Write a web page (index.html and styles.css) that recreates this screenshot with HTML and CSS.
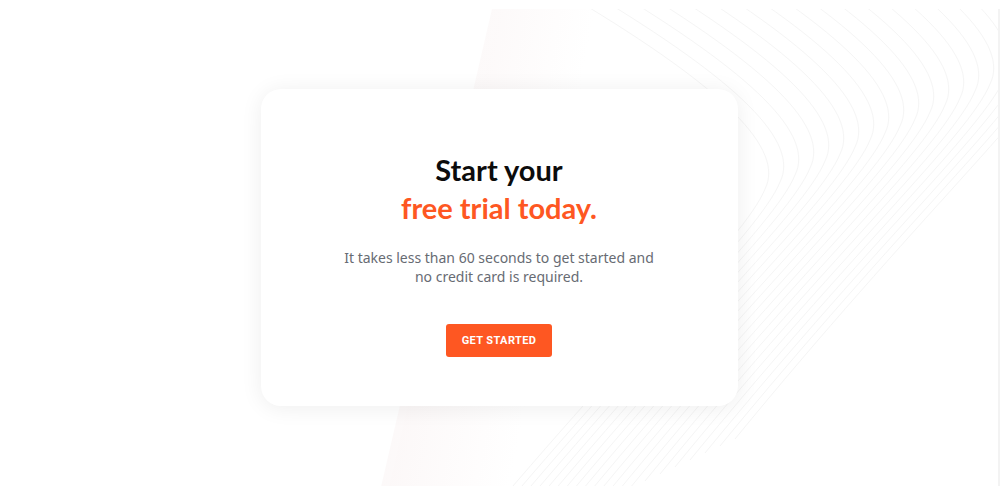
FILE: index.html
```html
<!DOCTYPE html>
<html lang="en">
<head>
    <meta charset="UTF-8">
    <meta name="viewport" content="width=device-width, initial-scale=1.0">
    <title>Start your free trial</title>
    <link rel="stylesheet" href="styles.css">
</head>
<body>

<section class="hero">
    <!-- decorative background: pink slab and faint wave lines -->
    <div class="slab"></div>
    <svg class="waves" width="1000" height="477" viewBox="0 0 1000 477" aria-hidden="true">
        <defs>
            <path id="wave" d="M-190 -160 C -40 -70, 20 -10, 0 30 C -20 80, -150 200, -330 420" fill="none" stroke="#f5f5f5" stroke-width="1"/>
        </defs>
        <g transform="translate(765 150)">
            <use href="#wave"/>
            <use href="#wave" transform="translate(15 -7)"/>
            <use href="#wave" transform="translate(30 -14)"/>
            <use href="#wave" transform="translate(45 -21)"/>
            <use href="#wave" transform="translate(60 -28)"/>
            <use href="#wave" transform="translate(75 -35)"/>
            <use href="#wave" transform="translate(90 -42)"/>
            <use href="#wave" transform="translate(105 -49)"/>
            <use href="#wave" transform="translate(120 -56)"/>
            <use href="#wave" transform="translate(135 -63)"/>
            <use href="#wave" transform="translate(150 -70)"/>
            <use href="#wave" transform="translate(165 -77)"/>
            <use href="#wave" transform="translate(180 -84)"/>
            <use href="#wave" transform="translate(195 -91)"/>
            <use href="#wave" transform="translate(210 -98)"/>
            <use href="#wave" transform="translate(225 -105)"/>
            <use href="#wave" transform="translate(240 -112)"/>
            <use href="#wave" transform="translate(255 -119)"/>
            <use href="#wave" transform="translate(270 -126)"/>
            <use href="#wave" transform="translate(285 -133)"/>
            <use href="#wave" transform="translate(300 -140)"/>
        </g>
    </svg>

    <div class="trial-card">
        <h2 class="trial-title">Start your<br><span class="accent">free trial today.</span></h2>
        <p class="trial-text">It takes less than 60 seconds to get started and no credit card is required.</p>
        <a href="#" class="btn-start">GET STARTED</a>
    </div>
</section>

</body>
</html>
```

FILE: styles.css
```css
body {
    margin: 0;
    padding: 0;
    background-color: #fff;
    font-family: "Noto Sans", sans-serif;
}

.hero {
    position: relative;
    height: 477px;
    margin: 9px 0 7px;
    display: flex;
    align-items: center;
    justify-content: center;
    overflow: hidden;
    border-right: 2px solid #f3f3f3;
}

.slab {
    position: absolute;
    top: 0;
    left: 0;
    width: 100%;
    height: 100%;
    background: linear-gradient(100deg, #f7efef 0%, #faf4f4 30%, #fff 60%);
    clip-path: polygon(49.3% 0, 100% 0, 100% 100%, 38.2% 100%);
}

.slab::before {
    content: "";
    position: absolute;
    top: 0;
    left: 0;
    width: 100%;
    height: 100%;
    background: linear-gradient(100deg, #f2e6e6 0%, #f7eded 25%, #fff 55%);
    clip-path: polygon(50.1% 0, 100% 0, 100% 100%, 39% 100%);
}

.waves {
    position: absolute;
    top: 0;
    left: 0;
}

.trial-card {
    position: relative;
    width: 477px;
    box-sizing: border-box;
    padding: 62px 20px 49px;
    background-color: #fff;
    border-radius: 20px;
    box-shadow: 0 2px 22px rgba(0, 0, 0, 0.07);
    text-align: center;
}

.trial-title {
    margin: 0;
    font-family: Lato, sans-serif;
    font-weight: 700;
    font-size: 29px;
    line-height: 38px;
    color: #0c0c0c;
}

.trial-title .accent {
    color: #fe5722;
}

.trial-text {
    max-width: 320px;
    margin: 21px auto 38px;
    font-size: 14px;
    line-height: 19px;
    color: #676b73;
}

.btn-start {
    display: inline-block;
    padding: 11px 16px;
    background-color: #fe5722;
    color: #fff;
    font-family: Roboto, sans-serif;
    font-weight: 700;
    font-size: 11px;
    line-height: 11px;
    letter-spacing: 0.4px;
    text-decoration: none;
    border-radius: 3px;
}
```
